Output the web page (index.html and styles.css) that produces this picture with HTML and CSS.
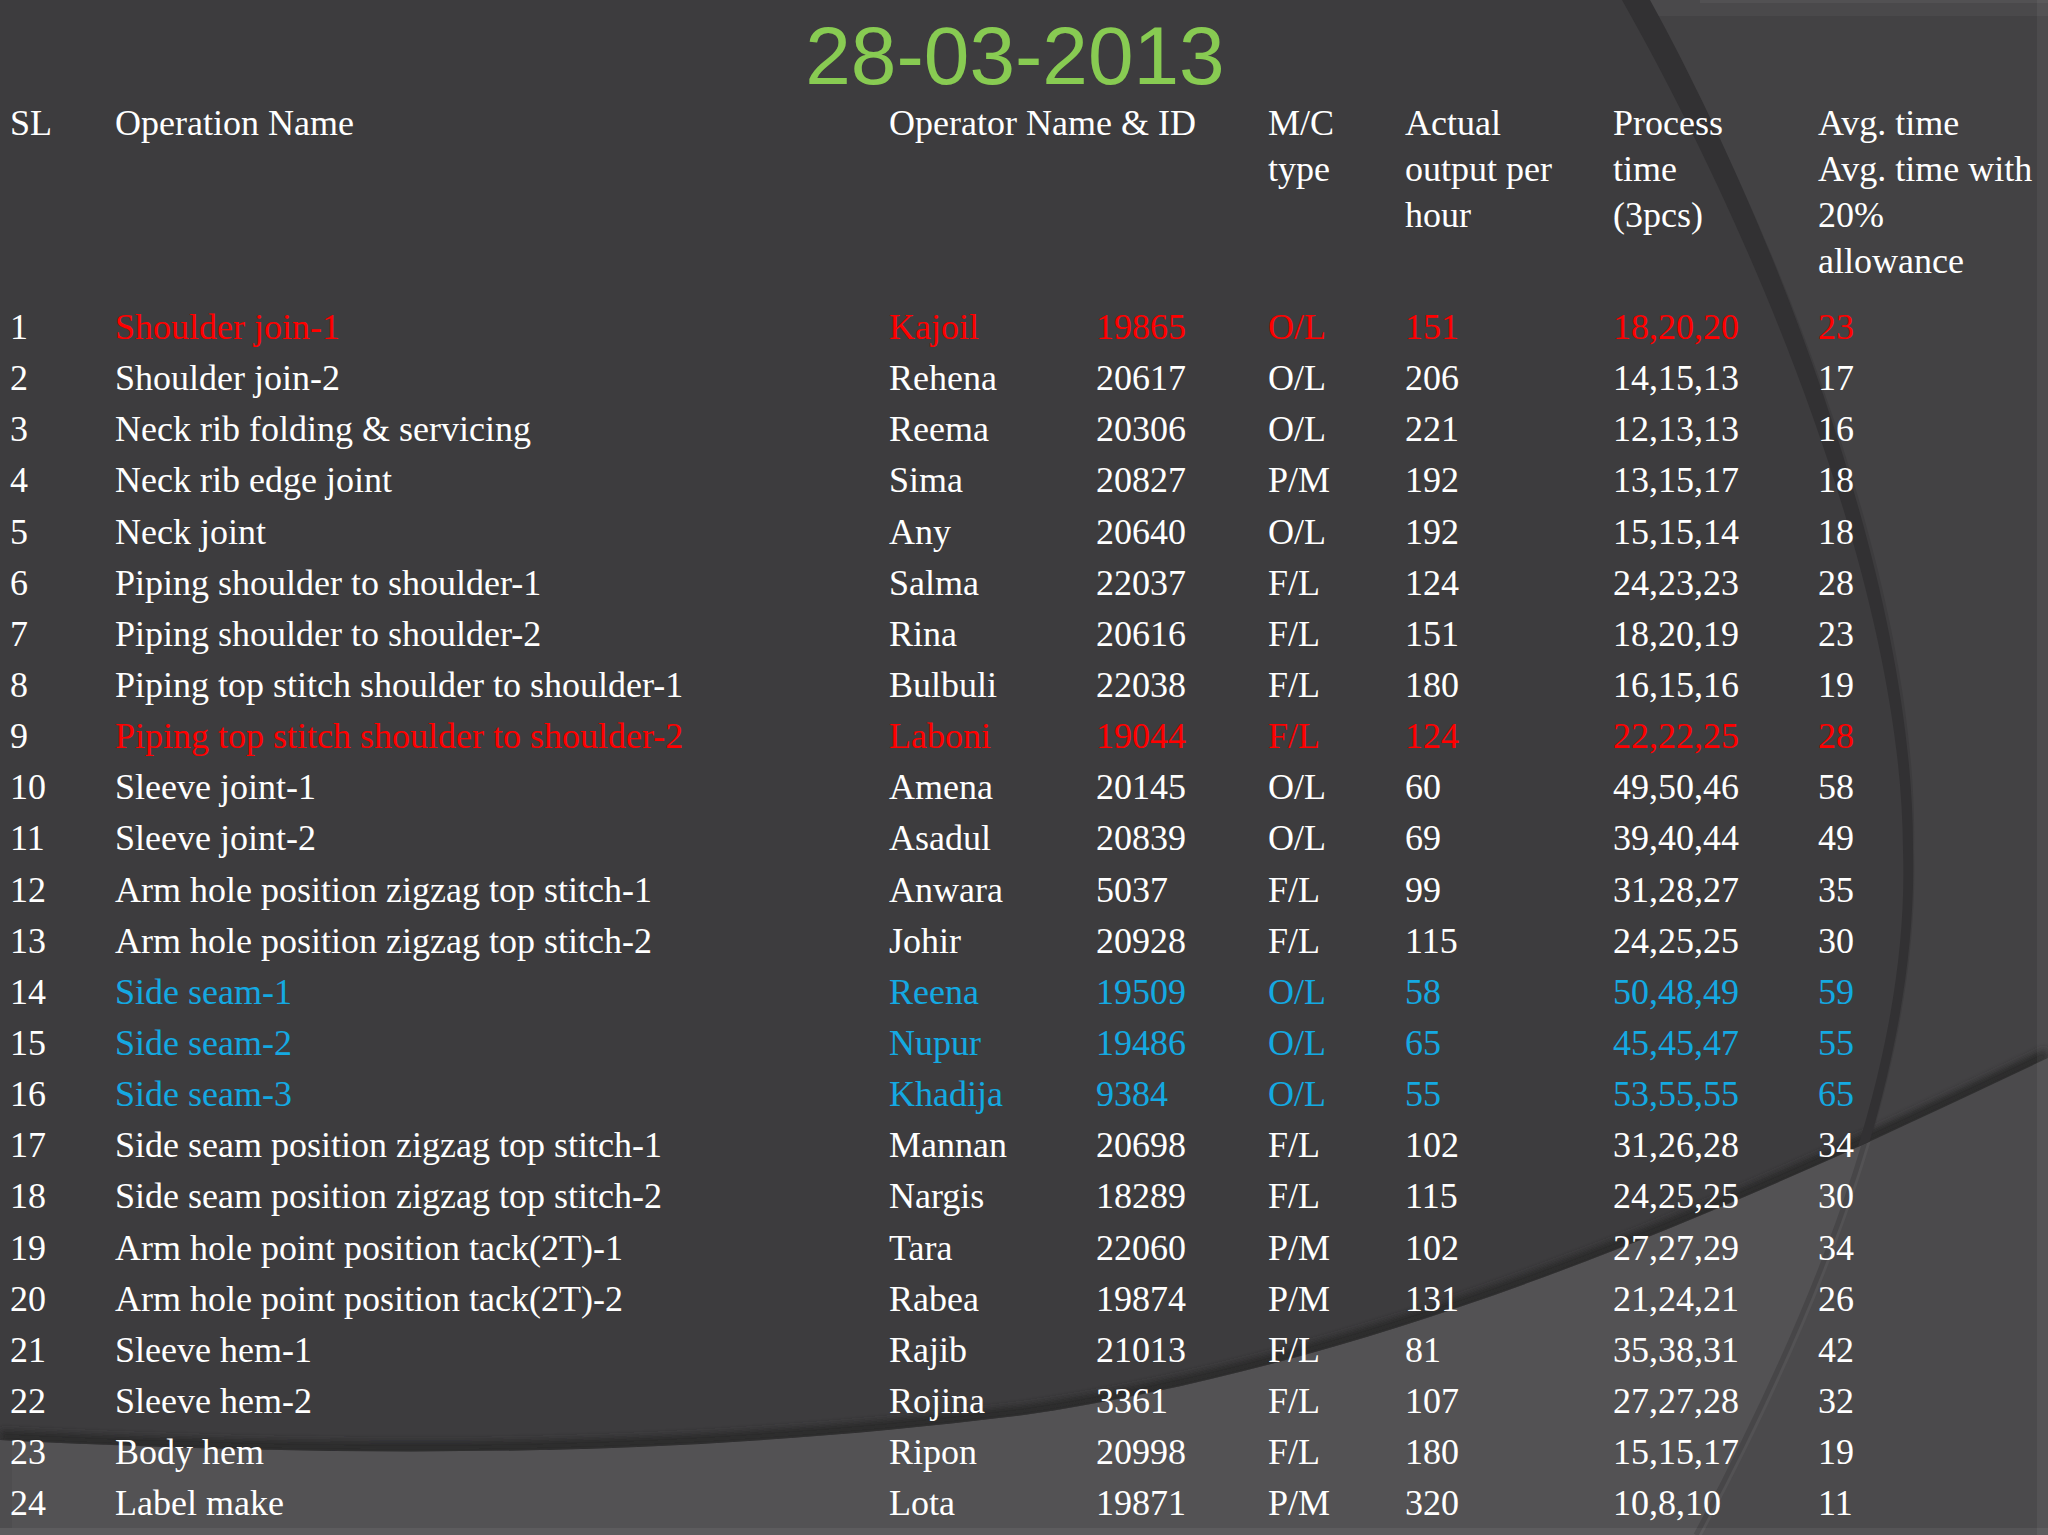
FILE: index.html
```html
<!DOCTYPE html>
<html lang="en">
<head>
<meta charset="utf-8">
<title>28-03-2013</title>
<link rel="stylesheet" href="styles.css">
</head>
<body>
<div class="slide">
  <svg class="bg" width="2048" height="1535" viewBox="0 0 2048 1535" aria-hidden="true">
    <defs>
      <clipPath id="swoosh">
        <path d="M0,1440 C400,1460 700,1455 1024,1415 C1400,1360 1750,1200 2048,1058 L2048,1535 L0,1535 Z"/>
      </clipPath>
      <clipPath id="above">
        <path d="M0,0 L2048,0 L2048,1058 C1750,1200 1400,1360 1024,1415 C700,1455 400,1460 0,1440 Z"/>
      </clipPath>
      <filter id="soft" x="-5%" y="-50%" width="110%" height="200%">
        <feGaussianBlur stdDeviation="3"/>
      </filter>
    </defs>
    <rect width="2048" height="1535" fill="#3d3c3e"/>
    <path d="M1648,0 C1770,218 1920,580 1914,850 C1920,1050 1838,1280 1702,1535 L2048,1535 L2048,0 Z" fill="#434244"/>
    <rect x="1640" y="0" width="408" height="16" fill="#4a494b"/>
    <rect x="1700" y="0" width="348" height="3" fill="#525153"/>
    <g clip-path="url(#swoosh)">
      <rect width="2048" height="1535" fill="#535254"/>
      <path d="M1648,0 C1770,218 1920,580 1914,850 C1920,1050 1838,1280 1702,1535 L2048,1535 L2048,0 Z" fill="#4b4a4c"/>
      <path d="M1636,0 C1760,220 1910,580 1908,850 C1915,1050 1832,1280 1696,1535" stroke="#474648" stroke-width="5" fill="none"/>
    </g>
    <g clip-path="url(#above)">
      <path d="M0,1436 C400,1456 700,1451 1024,1411 C1400,1356 1750,1196 2048,1054" stroke="#2a292b" stroke-width="12" fill="none" filter="url(#soft)"/>
      <path d="M1622,0 C1748,222 1902,580 1903,850 C1910,1050 1826,1280 1690,1535 L1702,1535 C1838,1280 1918,1050 1913,850 C1914,580 1770,218 1650,0 Z" fill="#323133"/>
    </g>
    <rect x="2037" y="0" width="11" height="1535" fill="#ffffff" fill-opacity="0.05"/>
    <rect x="0" y="1528" width="2048" height="7" fill="#ffffff" fill-opacity="0.06"/>
    <rect x="0" y="1440" width="12" height="88" fill="#000000" fill-opacity="0.06"/>
  </svg>

  <div class="content">
    <h1 class="title">28-03-2013</h1>
    <div class="table">
      <div class="row head">
        <div>SL</div>
        <div>Operation Name</div>
        <div class="span2">Operator Name &amp; ID</div>
        <div>M/C<br>type</div>
        <div>Actual<br>output per<br>hour</div>
        <div>Process<br>time<br>(3pcs)</div>
        <div class="wide">Avg. time<br>Avg. time with<br>20%<br>allowance</div>
      </div>

      <div class="row red"><div class="sl">1</div><div>Shoulder join-1</div><div>Kajoil</div><div>19865</div><div>O/L</div><div>151</div><div>18,20,20</div><div>23</div></div>
      <div class="row"><div class="sl">2</div><div>Shoulder join-2</div><div>Rehena</div><div>20617</div><div>O/L</div><div>206</div><div>14,15,13</div><div>17</div></div>
      <div class="row"><div class="sl">3</div><div>Neck rib folding &amp; servicing</div><div>Reema</div><div>20306</div><div>O/L</div><div>221</div><div>12,13,13</div><div>16</div></div>
      <div class="row"><div class="sl">4</div><div>Neck rib edge joint</div><div>Sima</div><div>20827</div><div>P/M</div><div>192</div><div>13,15,17</div><div>18</div></div>
      <div class="row"><div class="sl">5</div><div>Neck joint</div><div>Any</div><div>20640</div><div>O/L</div><div>192</div><div>15,15,14</div><div>18</div></div>
      <div class="row"><div class="sl">6</div><div>Piping shoulder to shoulder-1</div><div>Salma</div><div>22037</div><div>F/L</div><div>124</div><div>24,23,23</div><div>28</div></div>
      <div class="row"><div class="sl">7</div><div>Piping shoulder to shoulder-2</div><div>Rina</div><div>20616</div><div>F/L</div><div>151</div><div>18,20,19</div><div>23</div></div>
      <div class="row"><div class="sl">8</div><div>Piping top stitch shoulder to shoulder-1</div><div>Bulbuli</div><div>22038</div><div>F/L</div><div>180</div><div>16,15,16</div><div>19</div></div>
      <div class="row red"><div class="sl">9</div><div>Piping top stitch shoulder to shoulder-2</div><div>Laboni</div><div>19044</div><div>F/L</div><div>124</div><div>22,22,25</div><div>28</div></div>
      <div class="row"><div class="sl">10</div><div>Sleeve joint-1</div><div>Amena</div><div>20145</div><div>O/L</div><div>60</div><div>49,50,46</div><div>58</div></div>
      <div class="row"><div class="sl">11</div><div>Sleeve joint-2</div><div>Asadul</div><div>20839</div><div>O/L</div><div>69</div><div>39,40,44</div><div>49</div></div>
      <div class="row"><div class="sl">12</div><div>Arm hole position zigzag top stitch-1</div><div>Anwara</div><div>5037</div><div>F/L</div><div>99</div><div>31,28,27</div><div>35</div></div>
      <div class="row"><div class="sl">13</div><div>Arm hole position zigzag top stitch-2</div><div>Johir</div><div>20928</div><div>F/L</div><div>115</div><div>24,25,25</div><div>30</div></div>
      <div class="row blue"><div class="sl">14</div><div>Side seam-1</div><div>Reena</div><div>19509</div><div>O/L</div><div>58</div><div>50,48,49</div><div>59</div></div>
      <div class="row blue"><div class="sl">15</div><div>Side seam-2</div><div>Nupur</div><div>19486</div><div>O/L</div><div>65</div><div>45,45,47</div><div>55</div></div>
      <div class="row blue"><div class="sl">16</div><div>Side seam-3</div><div>Khadija</div><div>9384</div><div>O/L</div><div>55</div><div>53,55,55</div><div>65</div></div>
      <div class="row"><div class="sl">17</div><div>Side seam position zigzag top stitch-1</div><div>Mannan</div><div>20698</div><div>F/L</div><div>102</div><div>31,26,28</div><div>34</div></div>
      <div class="row"><div class="sl">18</div><div>Side seam position zigzag top stitch-2</div><div>Nargis</div><div>18289</div><div>F/L</div><div>115</div><div>24,25,25</div><div>30</div></div>
      <div class="row"><div class="sl">19</div><div>Arm hole point position tack(2T)-1</div><div>Tara</div><div>22060</div><div>P/M</div><div>102</div><div>27,27,29</div><div>34</div></div>
      <div class="row"><div class="sl">20</div><div>Arm hole point position tack(2T)-2</div><div>Rabea</div><div>19874</div><div>P/M</div><div>131</div><div>21,24,21</div><div>26</div></div>
      <div class="row"><div class="sl">21</div><div>Sleeve hem-1</div><div>Rajib</div><div>21013</div><div>F/L</div><div>81</div><div>35,38,31</div><div>42</div></div>
      <div class="row"><div class="sl">22</div><div>Sleeve hem-2</div><div>Rojina</div><div>3361</div><div>F/L</div><div>107</div><div>27,27,28</div><div>32</div></div>
      <div class="row"><div class="sl">23</div><div>Body hem</div><div>Ripon</div><div>20998</div><div>F/L</div><div>180</div><div>15,15,17</div><div>19</div></div>
      <div class="row"><div class="sl">24</div><div>Label make</div><div>Lota</div><div>19871</div><div>P/M</div><div>320</div><div>10,8,10</div><div>11</div></div>
    </div>
  </div>
</div>
</body>
</html>
```

FILE: styles.css
```css
html, body {
  margin: 0;
  padding: 0;
  width: 2048px;
  height: 1535px;
  overflow: hidden;
  background: #3d3c3e;
}

.slide {
  position: relative;
  width: 2048px;
  height: 1535px;
  overflow: hidden;
}

.bg {
  position: absolute;
  left: 0;
  top: 0;
  display: block;
}

.content {
  position: relative;
  width: 2048px;
  height: 1535px;
}

.title {
  margin: 0;
  padding: 11px 18px 0 0;
  height: 89px;
  font-family: "Liberation Sans", Arial, sans-serif;
  font-size: 82px;
  font-weight: normal;
  line-height: 89px;
  text-align: center;
  color: #88cb52;
}

.table {
  padding-left: 10px;
  font-family: "Liberation Serif", "Times New Roman", serif;
  font-size: 36px;
  color: #ffffff;
}

.row {
  display: grid;
  grid-template-columns: 105px 774px 207px 172px 137px 208px 205px 230px;
  height: 51.15px;
  line-height: 51.15px;
  white-space: nowrap;
}

.row.head {
  height: 184px;
  line-height: 46px;
  margin-bottom: 18px;
}

.row.head .span2 {
  grid-column: span 2;
}

.row.red {
  color: #ff0000;
}

.row.blue {
  color: #14a9e2;
}

.row .sl {
  color: #ffffff;
}
```
